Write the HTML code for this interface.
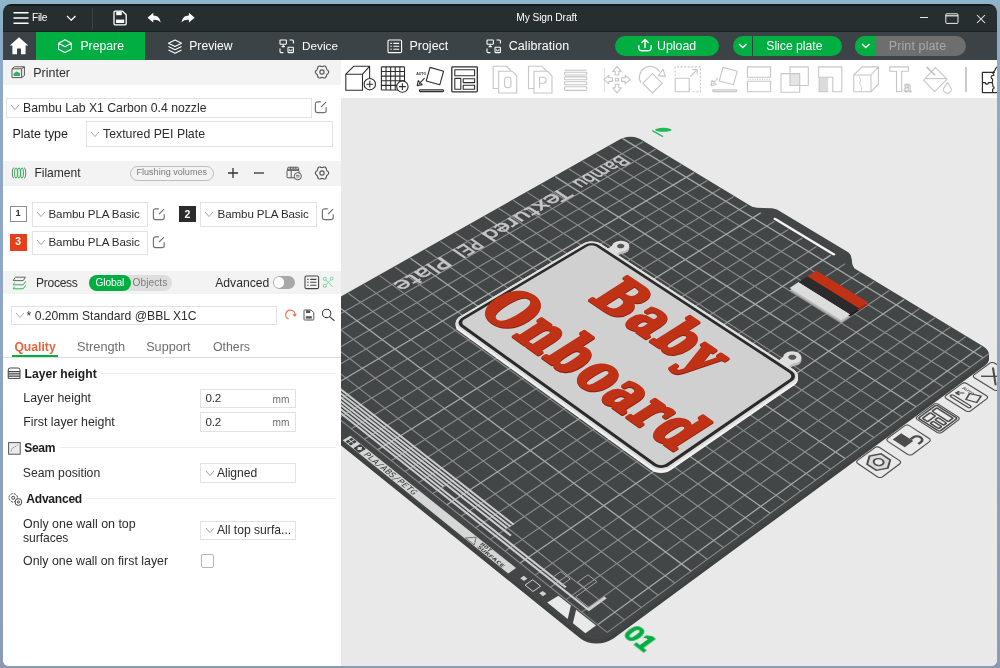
<!DOCTYPE html><html><head><meta charset="utf-8"><title>My Sign Draft</title><style>
*{box-sizing:border-box;margin:0;padding:0}
html,body{width:1000px;height:668px;overflow:hidden}
body{background:#8fa9c6;font-family:"Liberation Sans",sans-serif;position:relative;color:#2b2b2b}
#desk{position:absolute;left:0;top:0;width:1000px;height:668px;background:linear-gradient(180deg,#8eb5cc 0px,#8dabc8 30px,#8fa6c5 300px,#8b9dbb 640px,#8a9ab0 668px)}
#win{position:absolute;left:3px;top:4px;width:994px;height:662px;border-radius:8px 8px 6px 6px;overflow:hidden;background:#fff}
#in{position:absolute;left:-3px;top:-4px;width:1000px;height:668px;will-change:transform}
#in div,#in svg{position:absolute}
.t{white-space:nowrap;line-height:1;transform:translateY(-50%)}
.box{border:1px solid #e2e2e2;background:#fff}
.hdr{left:3px;width:338px;height:25px;background:#f3f3f3}
.ln{height:1px;background:#e6e6e6}
</style></head><body><div id="desk"></div><div id="win"><div id="in"><svg style="left:0;top:0" width="1000" height="668" viewBox="0 0 1000 668"><rect x="341" y="97" width="656" height="570" fill="#e9e9e9"/>
<path d="M985.33,365.34 L987.61,363.09 L988.85,360.46 L988.98,357.64 L987.99,354.83 L985.96,352.21 L983.03,349.96 L854.6,272.23 L852.53,268.99 L850.89,259.11 L848.59,256.09 L776.97,213.05 L772.25,211.8 L757.01,211.24 L752.05,210.16 L640.61,142.72 L637.66,141.35 L634.21,140.49 L630.48,140.18 L626.72,140.46 L623.19,141.29 L620.11,142.62 L245.13,354.21 L242.76,355.89 L241.03,357.85 L240.08,359.96 L239.97,362.08 L240.7,364.07 L242.23,365.78 L580.09,638.2 L583.53,640.46 L587.53,642.16 L591.91,643.21 L596.5,643.59 L601.14,643.26 L605.63,642.25 L609.79,640.6 L613.47,638.38Z" fill="#3f4242"/>
<path d="M985.33,364.06 L987.61,361.81 L988.85,359.18 L988.98,356.37 L987.99,353.55 L985.96,350.94 L983.03,348.69 L854.6,271.01 L852.53,267.77 L850.89,257.9 L848.59,254.88 L776.97,211.87 L772.25,210.63 L757.01,210.07 L752.05,208.99 L640.61,141.59 L637.66,140.22 L634.21,139.36 L630.48,139.06 L626.72,139.33 L623.19,140.16 L620.11,141.49 L245.13,352.94 L242.76,354.61 L241.03,356.57 L240.08,358.68 L239.97,360.8 L240.7,362.79 L242.23,364.5 L580.09,636.73 L583.53,638.99 L587.53,640.68 L591.91,641.74 L596.5,642.11 L601.14,641.79 L605.63,640.78 L609.79,639.13 L613.47,636.91Z" fill="#3f4242"/>
<path d="M985.33,362.78 L987.61,360.52 L988.85,357.9 L988.98,355.09 L987.99,352.28 L985.96,349.66 L983.03,347.42 L854.6,269.79 L852.53,266.56 L850.89,256.69 L848.59,253.67 L776.97,210.69 L772.25,209.45 L757.01,208.89 L752.05,207.81 L640.61,140.46 L637.66,139.1 L634.21,138.23 L630.48,137.93 L626.72,138.2 L623.19,139.03 L620.11,140.36 L245.13,351.66 L242.76,353.33 L241.03,355.29 L240.08,357.4 L239.97,359.52 L240.7,361.5 L242.23,363.22 L580.09,635.25 L583.53,637.52 L587.53,639.21 L591.91,640.26 L596.5,640.63 L601.14,640.31 L605.63,639.3 L609.79,637.66 L613.47,635.43Z" fill="#3f4242"/>
<path d="M985.33,361.49 L987.61,359.24 L988.85,356.62 L988.98,353.81 L987.99,351 L985.96,348.39 L983.03,346.14 L854.6,268.57 L852.53,265.34 L850.89,255.48 L848.59,252.46 L776.97,209.52 L772.25,208.27 L757.01,207.71 L752.05,206.63 L640.61,139.33 L637.66,137.97 L634.21,137.11 L630.48,136.8 L626.72,137.07 L623.19,137.9 L620.11,139.23 L245.13,350.38 L242.76,352.06 L241.03,354.01 L240.08,356.12 L239.97,358.24 L240.7,360.22 L242.23,361.93 L580.09,633.78 L583.53,636.04 L587.53,637.73 L591.91,638.78 L596.5,639.16 L601.14,638.83 L605.63,637.83 L609.79,636.18 L613.47,633.96Z" fill="#434646"/>
<path d="M547.23,602.61 L558.42,595.65 L570.9,605.59 L567.7,619.05Z" fill="#e9e9e9"/>
<path d="M576.08,609.71 L596.04,625.62 L585.46,633.3 L572.91,623.23Z" fill="#e9e9e9"/>
<clipPath id="pc"><path d="M985.33,361.49 L987.61,359.24 L988.85,356.62 L988.98,353.81 L987.99,351 L985.96,348.39 L983.03,346.14 L854.6,268.57 L852.53,265.34 L850.89,255.48 L848.59,252.46 L776.97,209.52 L772.25,208.27 L757.01,207.71 L752.05,206.63 L640.61,139.33 L637.66,137.97 L634.21,137.11 L630.48,136.8 L626.72,137.07 L623.19,137.9 L620.11,139.23 L245.13,350.38 L242.76,352.06 L241.03,354.01 L240.08,356.12 L239.97,358.24 L240.7,360.22 L242.23,361.93 L580.09,633.78 L583.53,636.04 L587.53,637.73 L591.91,638.78 L596.5,639.16 L601.14,638.83 L605.63,637.83 L609.79,636.18 L613.47,633.96Z" /></clipPath>
<g clip-path="url(#pc)"><line x1="262.54" y1="358.06" x2="643.08" y2="141.74" stroke="#8a8d8d" stroke-width="1.15"/><line x1="267.13" y1="338.98" x2="624.38" y2="619.85" stroke="#8a8d8d" stroke-width="1.15"/><line x1="274.81" y1="367.83" x2="655.67" y2="149.35" stroke="#8a8d8d" stroke-width="1.15"/><line x1="283.68" y1="329.65" x2="641.35" y2="607.45" stroke="#8a8d8d" stroke-width="1.15"/><line x1="287.21" y1="377.7" x2="668.38" y2="157.03" stroke="#8a8d8d" stroke-width="1.15"/><line x1="300.07" y1="320.42" x2="658.12" y2="595.19" stroke="#8a8d8d" stroke-width="1.15"/><line x1="299.74" y1="387.67" x2="681.21" y2="164.78" stroke="#8a8d8d" stroke-width="1.15"/><line x1="316.3" y1="311.28" x2="674.7" y2="583.08" stroke="#8a8d8d" stroke-width="1.15"/><line x1="325.2" y1="407.94" x2="707.23" y2="180.51" stroke="#8a8d8d" stroke-width="1.15"/><line x1="348.25" y1="293.27" x2="707.29" y2="559.27" stroke="#8a8d8d" stroke-width="1.15"/><line x1="338.14" y1="418.24" x2="720.43" y2="188.48" stroke="#8a8d8d" stroke-width="1.15"/><line x1="363.99" y1="284.4" x2="723.31" y2="547.57" stroke="#8a8d8d" stroke-width="1.15"/><line x1="351.22" y1="428.65" x2="733.75" y2="196.54" stroke="#8a8d8d" stroke-width="1.15"/><line x1="379.58" y1="275.62" x2="739.14" y2="536.01" stroke="#8a8d8d" stroke-width="1.15"/><line x1="364.45" y1="439.18" x2="747.2" y2="204.66" stroke="#8a8d8d" stroke-width="1.15"/><line x1="395.01" y1="266.93" x2="754.79" y2="524.57" stroke="#8a8d8d" stroke-width="1.15"/><line x1="391.33" y1="460.58" x2="774.49" y2="221.16" stroke="#8a8d8d" stroke-width="1.15"/><line x1="425.42" y1="249.8" x2="785.57" y2="502.08" stroke="#8a8d8d" stroke-width="1.15"/><line x1="405" y1="471.46" x2="788.34" y2="229.53" stroke="#8a8d8d" stroke-width="1.15"/><line x1="440.4" y1="241.36" x2="800.71" y2="491.03" stroke="#8a8d8d" stroke-width="1.15"/><line x1="418.82" y1="482.46" x2="802.32" y2="237.98" stroke="#8a8d8d" stroke-width="1.15"/><line x1="455.24" y1="233" x2="815.67" y2="480.09" stroke="#8a8d8d" stroke-width="1.15"/><line x1="432.8" y1="493.58" x2="816.44" y2="246.51" stroke="#8a8d8d" stroke-width="1.15"/><line x1="469.93" y1="224.72" x2="830.48" y2="469.28" stroke="#8a8d8d" stroke-width="1.15"/><line x1="461.22" y1="516.21" x2="845.1" y2="263.83" stroke="#8a8d8d" stroke-width="1.15"/><line x1="498.9" y1="208.4" x2="859.6" y2="448" stroke="#8a8d8d" stroke-width="1.15"/><line x1="475.68" y1="527.72" x2="859.65" y2="272.62" stroke="#8a8d8d" stroke-width="1.15"/><line x1="513.18" y1="200.35" x2="873.92" y2="437.54" stroke="#8a8d8d" stroke-width="1.15"/><line x1="490.31" y1="539.36" x2="874.34" y2="281.5" stroke="#8a8d8d" stroke-width="1.15"/><line x1="527.32" y1="192.38" x2="888.09" y2="427.18" stroke="#8a8d8d" stroke-width="1.15"/><line x1="505.1" y1="551.13" x2="889.18" y2="290.46" stroke="#8a8d8d" stroke-width="1.15"/><line x1="541.33" y1="184.49" x2="902.11" y2="416.94" stroke="#8a8d8d" stroke-width="1.15"/><line x1="535.21" y1="575.1" x2="919.31" y2="308.67" stroke="#8a8d8d" stroke-width="1.15"/><line x1="568.96" y1="168.93" x2="929.7" y2="396.78" stroke="#8a8d8d" stroke-width="1.15"/><line x1="550.52" y1="587.29" x2="934.61" y2="317.92" stroke="#8a8d8d" stroke-width="1.15"/><line x1="582.59" y1="161.25" x2="943.28" y2="386.86" stroke="#8a8d8d" stroke-width="1.15"/><line x1="566.03" y1="599.63" x2="950.06" y2="327.26" stroke="#8a8d8d" stroke-width="1.15"/><line x1="596.08" y1="153.65" x2="956.72" y2="377.05" stroke="#8a8d8d" stroke-width="1.15"/><line x1="581.71" y1="612.11" x2="965.68" y2="336.7" stroke="#8a8d8d" stroke-width="1.15"/><line x1="609.46" y1="146.11" x2="970.01" y2="367.33" stroke="#8a8d8d" stroke-width="1.15"/><line x1="312.4" y1="397.75" x2="694.16" y2="172.61" stroke="#a6a9a9" stroke-width="1.3"/><line x1="332.35" y1="302.23" x2="691.09" y2="571.11" stroke="#a6a9a9" stroke-width="1.3"/><line x1="377.82" y1="449.82" x2="760.78" y2="212.87" stroke="#a6a9a9" stroke-width="1.3"/><line x1="410.29" y1="258.32" x2="770.27" y2="513.26" stroke="#a6a9a9" stroke-width="1.3"/><line x1="446.93" y1="504.83" x2="830.7" y2="255.13" stroke="#a6a9a9" stroke-width="1.3"/><line x1="484.49" y1="216.52" x2="845.12" y2="458.58" stroke="#a6a9a9" stroke-width="1.3"/><line x1="520.07" y1="563.04" x2="904.17" y2="299.52" stroke="#a6a9a9" stroke-width="1.3"/><line x1="555.21" y1="176.67" x2="915.98" y2="406.81" stroke="#a6a9a9" stroke-width="1.3"/><line x1="597.58" y1="624.75" x2="981.45" y2="346.23" stroke="#a6a9a9" stroke-width="1.3"/><line x1="622.71" y1="138.65" x2="983.17" y2="357.72" stroke="#a6a9a9" stroke-width="1.3"/><line x1="250.4" y1="348.4" x2="607.2" y2="632.4" stroke="#939696" stroke-width="1.1" stroke-opacity="0.85"/><line x1="607.2" y1="632.4" x2="991" y2="352" stroke="#939696" stroke-width="1.1" stroke-opacity="0.85"/></g>
<text transform="matrix(-1.3559 0.7708 -1.2518 -0.7826 595.72 168.66)" font-size="13" text-anchor="middle" fill="#c6c8c8" stroke="#c6c8c8" stroke-width="0.35" font-family="'DejaVu Sans','Liberation Sans',sans-serif" textLength="36.0" lengthAdjust="spacingAndGlyphs">Bambu</text>
<text transform="matrix(-1.4264 0.8109 -1.2479 -0.8232 520.97 211.15)" font-size="13" text-anchor="middle" fill="#c6c8c8" stroke="#c6c8c8" stroke-width="0.35" font-family="'DejaVu Sans','Liberation Sans',sans-serif" textLength="57.5" lengthAdjust="spacingAndGlyphs">Textured</text>
<text transform="matrix(-1.4828 0.8429 -1.2436 -0.8557 462.51 244.39)" font-size="13" text-anchor="middle" fill="#c6c8c8" stroke="#c6c8c8" stroke-width="0.35" font-family="'DejaVu Sans','Liberation Sans',sans-serif" textLength="15.3" lengthAdjust="spacingAndGlyphs">PEI</text>
<text transform="matrix(-1.5274 0.8683 -1.2395 -0.8813 417.06 270.22)" font-size="13" text-anchor="middle" fill="#c6c8c8" stroke="#c6c8c8" stroke-width="0.35" font-family="'DejaVu Sans','Liberation Sans',sans-serif" textLength="32.7" lengthAdjust="spacingAndGlyphs">Plate</text>
<path d="M271.74,336.38 L512.84,525.3 L514.62,524.1 L273.48,335.4Z" fill="#cdcfcf"/>
<path d="M268.75,338.06 L509.5,527.12 L511.28,525.92 L270.49,337.08Z" fill="#cdcfcf"/>
<path d="M265.92,339.66 L506.16,528.71 L507.95,527.51 L267.67,338.67Z" fill="#cdcfcf"/>
<path d="M262.92,341.35 L510.04,536.24 L511.83,535.03 L264.67,340.36Z" fill="#cdcfcf"/>
<path d="M260.25,342.85 L442.82,487.12 L444.61,485.97 L262,341.86Z" fill="#cdcfcf"/>
<path d="M257.4,344.45 L564.97,588 L566.77,586.74 L259.16,343.46Z" fill="#cdcfcf"/>
<path d="M254.56,346.06 L587.56,610.3 L589.36,609.01 L256.32,345.07Z" fill="#cdcfcf"/>
<path d="M342.68,440.33 L508.25,573.39 L516.05,568.03 L350.38,435.64Z" fill="#d6d6d6"/>
<text transform="matrix(1.3394 1.0753 -1.7169 1.0599 362.93 454.65)" font-size="4.1" text-anchor="start" fill="#3e4141" font-family="'DejaVu Sans Mono','Liberation Mono',monospace" textLength="37.6" lengthAdjust="spacingAndGlyphs">PLA/ABS/PETG</text>
<text transform="matrix(1.4683 1.1763 -1.7289 1.1597 479.87 544.2)" font-size="2.3" text-anchor="start" fill="#3e4141" font-family="'DejaVu Sans Mono','Liberation Mono',monospace" font-weight="bold" textLength="6.8" lengthAdjust="spacingAndGlyphs">HOT</text>
<text transform="matrix(1.4685 1.1796 -1.7331 1.1628 476.68 546.99)" font-size="2.3" text-anchor="start" fill="#3e4141" font-family="'DejaVu Sans Mono','Liberation Mono',monospace" font-weight="bold" textLength="17.6" lengthAdjust="spacingAndGlyphs">SURFACE</text>
<path d="M345.52,441.4 L347.77,443.2 L350.51,441.53 L348.26,439.73Z" fill="#3e4141"/>
<path d="M348.43,443.74 L350.68,445.55 L353.43,443.87 L351.17,442.06Z" fill="#3e4141"/>
<path d="M348.95,439.31 L351.19,441.11 L353.93,439.44 L351.68,437.64Z" fill="#3e4141"/>
<path d="M351.86,441.64 L354.11,443.45 L356.85,441.77 L354.59,439.97Z" fill="#3e4141"/>
<path d="M365.26,449.22 L365.67,448.7 L365.45,448.16 L360.91,444.54 L360.19,444.32 L359.39,444.53 L354.08,447.79 L353.67,448.32 L353.89,448.85 L358.42,452.49 L359.14,452.71 L359.95,452.5Z" fill="#3e4141"/>
<path d="M357.8,447.01 L361.98,447.09 L361.54,450 L357.35,449.93Z" fill="#d6d6d6"/>
<path d="M465.42,537.95 L474.18,544.99 L476.19,537.19Z" fill="none" stroke="#5a5c5c" stroke-width="0.8"/>
<path d="M577.46,582.2 L587.99,574.77 L596.88,581.7 L586.35,589.19Z" fill="none" stroke="#a9abab" stroke-width="0.9"/>
<path d="M552.06,577.72 L560.78,571.62 L570.18,579.02 L561.45,585.16Z" fill="none" stroke="#a9abab" stroke-width="0.9"/>
<path d="M586.35,589.19 L575.56,596.85 L590.18,608.42" fill="none" stroke="#a9abab" stroke-width="0.9"/>
<path d="M586.34,609.27 L588.86,611.28 L606.83,598.36 L604.3,596.38Z" fill="#cdcfcf"/>
<path d="M525.08,585.09 L532.7,579.79 L540.65,586.14 L533.03,591.47Z" fill="none" stroke="#d0d0d0" stroke-width="1"/>
<path d="M520.32,578.15 L523.78,575.76 L527.43,578.67 L523.96,581.07Z" fill="#d0d0d0"/>
<path d="M539.26,593.34 L542.73,590.91 L546.43,593.87 L542.96,596.3Z" fill="#d0d0d0"/>
<path d="M835.08,254.97 L835.43,254.38 L834.99,253.77 L775.85,218.11 L774.9,217.87 L773.97,218.1 L773.71,218.27 L773.34,218.84 L773.75,219.42 L832.9,255.14 L833.87,255.39 L834.82,255.15Z" fill="#f6f6f6"/>
<path d="M789.67,290.26 L841.32,322.56 L850.24,316.5 L798.61,284.42Z" fill="#b9b9b9"/>
<path d="M798.61,284.42 L850.24,316.5 L859.1,310.49 L807.48,278.62Z" fill="#1c1c1c"/>
<path d="M807.48,278.62 L859.1,310.49 L867.91,304.51 L816.3,272.85Z" fill="#9a2410"/>
<path d="M789.67,287.94 L841.32,320.19 L850.24,314.14 L798.61,282.1Z" fill="#dcdcdc"/>
<path d="M798.61,282.1 L850.24,314.14 L859.1,308.14 L807.48,276.31Z" fill="#2b2b2b"/>
<path d="M807.48,276.31 L859.1,308.14 L867.91,302.17 L816.3,270.55Z" fill="#c03216"/>
<path d="M606.71,252.02 L614.66,257.21 L625.49,251.68 L615.96,245.49Z" fill="#bdbdbd"/>
<path d="M626.56,252.37 L627.96,251.27 L628.87,249.99 L629.22,248.62 L628.99,247.24 L628.2,245.96 L626.9,244.86 L625.19,244.01 L623.16,243.47 L620.98,243.28 L618.78,243.45 L616.7,243.97 L614.9,244.8 L613.49,245.89 L612.58,247.16 L612.21,248.54 L612.43,249.91 L613.21,251.2 L614.5,252.31 L616.23,253.17 L618.25,253.71 L620.45,253.9 L622.67,253.73 L624.75,253.21Z" fill="#bdbdbd"/>
<path d="M606.71,250.74 L614.66,255.93 L625.49,250.4 L615.96,244.21Z" fill="#bdbdbd"/>
<path d="M626.56,251.09 L627.96,249.99 L628.87,248.71 L629.22,247.34 L628.99,245.97 L628.2,244.69 L626.9,243.58 L625.19,242.74 L623.16,242.2 L620.98,242.01 L618.78,242.18 L616.7,242.7 L614.9,243.53 L613.49,244.62 L612.58,245.89 L612.21,247.26 L612.43,248.64 L613.21,249.92 L614.5,251.03 L616.23,251.89 L618.25,252.43 L620.45,252.62 L622.67,252.45 L624.75,251.93Z" fill="#bdbdbd"/>
<path d="M606.71,249.46 L614.66,254.65 L625.49,249.12 L615.96,242.94Z" fill="#dedede"/>
<path d="M626.56,249.81 L627.96,248.71 L628.87,247.44 L629.22,246.06 L628.99,244.69 L628.2,243.41 L626.9,242.31 L625.19,241.46 L623.16,240.93 L620.98,240.74 L618.78,240.91 L616.7,241.42 L614.9,242.25 L613.49,243.34 L612.58,244.61 L612.21,245.98 L612.43,247.36 L613.21,248.64 L614.5,249.75 L616.23,250.61 L618.25,251.15 L620.45,251.34 L622.67,251.17 L624.75,250.65Z" fill="#dedede"/>
<path d="M623.24,247.66 L624.07,246.92 L624.39,246.04 L624.15,245.16 L623.39,244.42 L622.23,243.92 L620.83,243.74 L619.42,243.9 L618.2,244.39 L617.37,245.13 L617.04,246.01 L617.28,246.88 L618.04,247.63 L619.2,248.13 L620.6,248.32 L622.02,248.15Z" fill="#55585a"/>
<path d="M777.79,363.87 L786.79,369.75 L797.73,363.48 L786.94,356.48Z" fill="#bdbdbd"/>
<path d="M798.94,364.26 L800.32,363.02 L801.15,361.57 L801.38,360.02 L800.99,358.46 L800.01,357.01 L798.52,355.76 L796.6,354.8 L794.4,354.2 L792.05,353.98 L789.73,354.17 L787.58,354.76 L785.75,355.7 L784.36,356.93 L783.52,358.37 L783.28,359.93 L783.65,361.49 L784.62,362.94 L786.11,364.2 L788.03,365.17 L790.25,365.78 L792.61,366 L794.95,365.81 L797.11,365.21Z" fill="#bdbdbd"/>
<path d="M777.79,362.51 L786.79,368.38 L797.73,362.12 L786.94,355.12Z" fill="#bdbdbd"/>
<path d="M798.94,362.9 L800.32,361.66 L801.15,360.21 L801.38,358.66 L800.99,357.1 L800.01,355.65 L798.52,354.41 L796.6,353.45 L794.4,352.84 L792.05,352.63 L789.73,352.82 L787.58,353.41 L785.75,354.35 L784.36,355.58 L783.52,357.02 L783.28,358.57 L783.65,360.13 L784.62,361.58 L786.11,362.84 L788.03,363.81 L790.25,364.42 L792.61,364.64 L794.95,364.44 L797.11,363.85Z" fill="#bdbdbd"/>
<path d="M777.79,361.15 L786.79,367.02 L797.73,360.76 L786.94,353.76Z" fill="#dedede"/>
<path d="M798.94,361.54 L800.32,360.3 L801.15,358.85 L801.38,357.3 L800.99,355.75 L800.01,354.3 L798.52,353.05 L796.6,352.1 L794.4,351.49 L792.05,351.27 L789.73,351.47 L787.58,352.05 L785.75,352.99 L784.36,354.22 L783.52,355.66 L783.28,357.21 L783.65,358.77 L784.62,360.22 L786.11,361.48 L788.03,362.45 L790.25,363.06 L792.61,363.28 L794.95,363.08 L797.11,362.49Z" fill="#dedede"/>
<path d="M795.18,359.1 L795.99,358.27 L796.24,357.28 L795.89,356.28 L795,355.44 L793.71,354.87 L792.21,354.67 L790.72,354.86 L789.48,355.41 L788.67,356.25 L788.42,357.24 L788.76,358.23 L789.65,359.08 L790.94,359.65 L792.45,359.85 L793.94,359.66Z" fill="#55585a"/>
<path d="M794.23,385.14 L795.85,383.76 L797.02,382.2 L797.71,380.5 L797.88,378.73 L797.54,376.96 L796.69,375.26 L795.37,373.7 L793.63,372.32 L600.76,246.35 L598.92,245.37 L596.79,244.64 L594.47,244.18 L592.04,244.02 L589.58,244.16 L587.2,244.59 L584.98,245.31 L583.01,246.27 L460.48,318.87 L458.68,320.15 L457.27,321.62 L456.31,323.21 L455.82,324.88 L455.84,326.55 L456.37,328.16 L457.38,329.65 L458.84,330.96 L651.04,469.99 L653.15,471.24 L655.58,472.18 L658.22,472.76 L660.98,472.97 L663.76,472.79 L666.43,472.23 L668.9,471.32 L671.07,470.09Z" fill="#f2f2f2"/>
<path d="M794.23,384.45 L795.85,383.08 L797.02,381.51 L797.71,379.81 L797.88,378.04 L797.54,376.28 L796.69,374.58 L795.37,373.01 L793.63,371.64 L600.76,245.71 L598.92,244.73 L596.79,244 L594.47,243.55 L592.04,243.39 L589.58,243.52 L587.2,243.96 L584.98,244.67 L583.01,245.63 L460.48,318.21 L458.68,319.49 L457.27,320.95 L456.31,322.55 L455.82,324.21 L455.84,325.88 L456.37,327.49 L457.38,328.98 L458.84,330.29 L651.04,469.27 L653.15,470.52 L655.58,471.46 L658.22,472.04 L660.98,472.25 L663.76,472.07 L666.43,471.51 L668.9,470.6 L671.07,469.37Z" fill="#f2f2f2"/>
<path d="M794.23,383.76 L795.85,382.39 L797.02,380.82 L797.71,379.12 L797.88,377.36 L797.54,375.59 L796.69,373.89 L795.37,372.33 L793.63,370.96 L600.76,245.08 L598.92,244.1 L596.79,243.36 L594.47,242.91 L592.04,242.75 L589.58,242.89 L587.2,243.32 L584.98,244.03 L583.01,244.99 L460.48,317.54 L458.68,318.82 L457.27,320.29 L456.31,321.88 L455.82,323.55 L455.84,325.22 L456.37,326.83 L457.38,328.31 L458.84,329.62 L651.04,468.55 L653.15,469.8 L655.58,470.74 L658.22,471.32 L660.98,471.53 L663.76,471.35 L666.43,470.79 L668.9,469.88 L671.07,468.65Z" fill="#f2f2f2"/>
<path d="M794.23,383.07 L795.85,381.7 L797.02,380.13 L797.71,378.44 L797.88,376.67 L797.54,374.91 L796.69,373.21 L795.37,371.64 L793.63,370.27 L600.76,244.44 L598.92,243.46 L596.79,242.73 L594.47,242.27 L592.04,242.11 L589.58,242.25 L587.2,242.68 L584.98,243.39 L583.01,244.36 L460.48,316.88 L458.68,318.16 L457.27,319.62 L456.31,321.22 L455.82,322.88 L455.84,324.55 L456.37,326.16 L457.38,327.65 L458.84,328.96 L651.04,467.83 L653.15,469.08 L655.58,470.02 L658.22,470.6 L660.98,470.8 L663.76,470.63 L666.43,470.07 L668.9,469.16 L671.07,467.94Z" fill="#f2f2f2"/>
<path d="M794.23,382.38 L795.85,381.01 L797.02,379.45 L797.71,377.75 L797.88,375.98 L797.54,374.22 L796.69,372.52 L795.37,370.96 L793.63,369.59 L600.76,243.8 L598.92,242.82 L596.79,242.09 L594.47,241.64 L592.04,241.48 L589.58,241.61 L587.2,242.05 L584.98,242.76 L583.01,243.72 L460.48,316.22 L458.68,317.49 L457.27,318.96 L456.31,320.55 L455.82,322.21 L455.84,323.88 L456.37,325.49 L457.38,326.98 L458.84,328.29 L651.04,467.11 L653.15,468.36 L655.58,469.3 L658.22,469.88 L660.98,470.08 L663.76,469.91 L666.43,469.35 L668.9,468.44 L671.07,467.22Z" fill="#f2f2f2"/>
<path d="M794.23,382.38 L795.85,381.01 L797.02,379.45 L797.71,377.75 L797.88,375.98 L797.54,374.22 L796.69,372.52 L795.37,370.96 L793.63,369.59 L600.76,243.8 L598.92,242.82 L596.79,242.09 L594.47,241.64 L592.04,241.48 L589.58,241.61 L587.2,242.05 L584.98,242.76 L583.01,243.72 L460.48,316.22 L458.68,317.49 L457.27,318.96 L456.31,320.55 L455.82,322.21 L455.84,323.88 L456.37,325.49 L457.38,326.98 L458.84,328.29 L651.04,467.11 L653.15,468.36 L655.58,469.3 L658.22,469.88 L660.98,470.08 L663.76,469.91 L666.43,469.35 L668.9,468.44 L671.07,467.22Z" fill="#dedede"/>
<path d="M792.1,380.99 L793.37,379.91 L794.29,378.69 L794.83,377.35 L794.97,375.97 L794.7,374.59 L794.04,373.25 L793.01,372.03 L791.64,370.95 L598.77,244.98 L597.33,244.21 L595.66,243.64 L593.84,243.28 L591.93,243.16 L590,243.26 L588.13,243.6 L586.39,244.16 L584.84,244.92 L462.3,317.52 L460.89,318.52 L459.78,319.67 L459.02,320.92 L458.65,322.23 L458.67,323.54 L459.08,324.8 L459.87,325.96 L461.02,326.99 L653.24,465.61 L654.89,466.59 L656.8,467.32 L658.87,467.78 L661.04,467.94 L663.21,467.8 L665.3,467.36 L667.24,466.65 L668.94,465.69Z" fill="#2a2a2a"/>
<path d="M789.37,379.2 L790.19,378.5 L790.79,377.71 L791.14,376.85 L791.23,375.95 L791.06,375.06 L790.63,374.19 L789.96,373.4 L789.08,372.7 L596.22,246.51 L595.28,246.01 L594.2,245.63 L593.02,245.4 L591.78,245.32 L590.53,245.39 L589.32,245.61 L588.19,245.97 L587.19,246.46 L464.64,319.2 L463.72,319.85 L463.01,320.59 L462.52,321.4 L462.28,322.24 L462.29,323.09 L462.56,323.91 L463.08,324.66 L463.82,325.32 L656.06,463.68 L657.13,464.31 L658.36,464.78 L659.7,465.08 L661.1,465.18 L662.5,465.09 L663.86,464.81 L665.11,464.35 L666.21,463.73Z" fill="#d0d0d0"/>
<text transform="matrix(1.2109 0.8205 -1.4717 0.9401 645.33 338.62)" font-size="35" text-anchor="middle" fill="#8e1f0d" stroke="#8e1f0d" stroke-width="1.7" letter-spacing="1.9" font-stretch="condensed" font-family="'DejaVu Serif Condensed','DejaVu Serif','Liberation Serif',serif" font-weight="bold" stroke-linejoin="round">Baby</text>
<text transform="matrix(1.2086 0.8602 -1.5431 0.9857 576.77 382.34)" font-size="35" text-anchor="middle" fill="#8e1f0d" stroke="#8e1f0d" stroke-width="1.7" letter-spacing="1.9" font-stretch="condensed" font-family="'DejaVu Serif Condensed','DejaVu Serif','Liberation Serif',serif" font-weight="bold" stroke-linejoin="round">Onboard</text>
<text transform="matrix(1.2109 0.8205 -1.4717 0.9401 645.33 337.57)" font-size="35" text-anchor="middle" fill="#c03216" stroke="#c03216" stroke-width="1.7" letter-spacing="1.9" font-stretch="condensed" font-family="'DejaVu Serif Condensed','DejaVu Serif','Liberation Serif',serif" font-weight="bold" stroke-linejoin="round">Baby</text>
<text transform="matrix(1.2086 0.8602 -1.5431 0.9857 576.77 381.27)" font-size="35" text-anchor="middle" fill="#c03216" stroke="#c03216" stroke-width="1.7" letter-spacing="1.9" font-stretch="condensed" font-family="'DejaVu Serif Condensed','DejaVu Serif','Liberation Serif',serif" font-weight="bold" stroke-linejoin="round">Onboard</text>
<path d="M1014.66,377.92 L1015.31,376.99 L1015.13,375.91 L1014.18,374.97 L994.44,362.99 L992.97,362.45 L991.37,362.44 L990.07,362.97 L974,374.78 L973.32,375.7 L973.48,376.78 L974.42,377.72 L994.18,389.9 L995.67,390.45 L997.3,390.46 L998.62,389.92Z" fill="none" stroke="#4c4c4c" stroke-width="1.1"/>
<g transform="matrix(1.6188 0.9901 -1.3163 0.9757 994.31 376.35)"><path d="M-4.5,-4.5 L4.5,4.5 M-4.5,4.5 L4.5,-4.5" stroke="#4c4c4c" stroke-width="1" fill="none"/></g>
<path d="M986.91,398.67 L987.59,397.72 L987.42,396.62 L986.47,395.66 L966.69,383.41 L965.22,382.86 L963.6,382.85 L962.28,383.39 L945.84,395.46 L945.15,396.41 L945.29,397.51 L946.23,398.47 L966.03,410.92 L967.52,411.49 L969.17,411.5 L970.51,410.94Z" fill="none" stroke="#4c4c4c" stroke-width="1.1"/>
<g transform="matrix(1.6218 1.0122 -1.3457 0.9975 966.36 397.06)" stroke="#4c4c4c" stroke-width="0.8" fill="none"><rect x="-6" y="3.4" width="12" height="1.7" rx="0.8"/><path d="M-0.5,-3 L4.5,-5.5 L6,-0.5 L1,1.5 Z"/><path d="M-5.5,1.5 L-2.5,-1.5 M-5.5,1.5 L-5,-0.8 M-5.5,1.5 L-3.2,1.2"/></g>
<text transform="matrix(1.6119 1.0029 -1.3419 0.9883 961.77 388.35)" font-size="2.4" text-anchor="start" fill="#4c4c4c" font-family="'Liberation Sans',sans-serif" font-weight="bold">AUTO</text>
<path d="M958.54,419.89 L959.24,418.92 L959.09,417.79 L958.14,416.81 L938.33,404.28 L936.84,403.72 L935.21,403.71 L933.86,404.26 L917.06,416.61 L916.34,417.58 L916.47,418.71 L917.4,419.69 L937.23,432.42 L938.74,433 L940.4,433.01 L941.77,432.44Z" fill="none" stroke="#4c4c4c" stroke-width="1.1"/>
<g transform="matrix(1.6246 1.0350 -1.3762 1.0201 937.78 418.25)" stroke="#4c4c4c" stroke-width="0.9" fill="none"><rect x="-6.5" y="-6.5" width="13" height="13" rx="1"/><rect x="-5" y="-5.2" width="10" height="3.4" rx="0.4"/><rect x="-5" y="-0.4" width="3.2" height="5.6" rx="0.4"/><rect x="-0.2" y="-0.4" width="5.2" height="2.1" rx="0.4"/><rect x="-0.2" y="3.1" width="5.2" height="2.1" rx="0.4"/></g>
<path d="M929.53,441.6 L930.24,440.6 L930.11,439.44 L929.16,438.44 L909.32,425.63 L907.83,425.06 L906.18,425.05 L904.8,425.61 L887.62,438.23 L886.88,439.23 L886.99,440.38 L887.92,441.39 L907.78,454.41 L909.29,455 L910.97,455.01 L912.36,454.43Z" fill="none" stroke="#4c4c4c" stroke-width="1.1"/>
<g transform="matrix(1.6271 1.0586 -1.4076 1.0434 908.56 439.91)"><rect x="-5.4" y="-1" width="7.4" height="6" fill="#4c4c4c"/><path d="M0.4,-1 V-3 A2.3,2.3 0 0 1 5,-3 V-1.2" stroke="#4c4c4c" stroke-width="1.3" fill="none"/></g>
<path d="M899.84,463.8 L900.58,462.78 L900.47,461.6 L899.52,460.57 L879.65,447.47 L878.15,446.88 L876.48,446.87 L875.08,447.44 L857.51,460.36 L856.74,461.38 L856.83,462.56 L857.75,463.58 L877.64,476.91 L879.16,477.52 L880.86,477.52 L882.28,476.93Z" fill="none" stroke="#4c4c4c" stroke-width="1.1"/>
<g transform="matrix(1.6293 1.0831 -1.4402 1.0675 878.65 462.08)" stroke="#4c4c4c" stroke-width="0.9" fill="none"><polygon points="5.6,0 2.8,4.85 -2.8,4.85 -5.6,0 -2.8,-4.85 2.8,-4.85" fill="#d9d9d9"/><circle r="2.3" fill="#ebebeb"/></g>
<text transform="matrix(1.6188 1.2831 -1.7212 1.2651 621.45 634.77)" font-size="12.5" text-anchor="start" fill="#00ae42" stroke="#00ae42" stroke-width="0.5" font-family="'Liberation Sans',sans-serif" font-weight="bold">01</text>
<ellipse cx="663.3" cy="129.8" rx="8.3" ry="2" fill="#00ae42" opacity="0.85"/>
<path d="M652.3,130.6 L663,136.6" stroke="#00ae42" stroke-width="1.3" opacity="0.85"/></svg><div style="left:3px;top:60px;width:338px;height:606px;background:#fff;"></div>
<div style="left:3px;top:60px;width:338px;height:24.5px;background:#f3f3f3;"></div>
<svg style="left:11px;top:66px" width="15" height="13" viewBox="0 0 15 13"><g fill="none" stroke="#555" stroke-width="1"><path d="M1,2.8 H10.6 V11.6 H1 Z M1,2.8 L3.6,0.8 H13.4 L10.6,2.8 M13.4,0.8 V9.6 L10.6,11.6"/></g><path d="M2.6,10 V7.4 L5.4,5.6 L9,7 V10 Z" fill="#2fb35c"/></svg>
<svg style="left:314.4px;top:63.8px" width="16" height="16" viewBox="0 0 16 16"><path d="M14.67,8.00 L14.56,8.57 L14.26,9.10 L13.84,9.57 L13.39,9.96 L13.00,10.33 L12.70,10.71 L12.52,11.16 L12.40,11.69 L12.28,12.28 L12.09,12.87 L11.78,13.40 L11.34,13.78 L10.78,13.97 L10.18,13.98 L9.57,13.84 L9.00,13.65 L8.48,13.49 L8.00,13.43 L7.52,13.49 L7.00,13.65 L6.43,13.84 L5.82,13.98 L5.22,13.97 L4.67,13.78 L4.22,13.40 L3.91,12.87 L3.72,12.28 L3.60,11.69 L3.48,11.16 L3.30,10.72 L3.00,10.33 L2.61,9.96 L2.16,9.57 L1.74,9.10 L1.44,8.57 L1.33,8.00 L1.44,7.43 L1.74,6.90 L2.16,6.43 L2.61,6.04 L3.00,5.67 L3.30,5.29 L3.48,4.84 L3.60,4.31 L3.72,3.72 L3.91,3.13 L4.22,2.60 L4.66,2.22 L5.22,2.03 L5.82,2.02 L6.43,2.16 L7.00,2.35 L7.52,2.51 L8.00,2.57 L8.48,2.51 L9.00,2.35 L9.57,2.16 L10.18,2.02 L10.78,2.03 L11.33,2.22 L11.78,2.60 L12.09,3.13 L12.28,3.72 L12.40,4.31 L12.52,4.84 L12.70,5.29 L13.00,5.67 L13.39,6.04 L13.84,6.43 L14.26,6.90 L14.56,7.43Z" fill="none" stroke="#555" stroke-width="1.15" stroke-linejoin="round"/><circle cx="8" cy="8" r="2.15" fill="none" stroke="#555" stroke-width="1.15"/></svg>
<div class="box" style="left:6px;top:98px;width:306px;height:19.5px"></div>
<svg style="left:10.0px;top:104.25px" width="10" height="6.5" viewBox="0 0 10 6.5"><path d="M1,1 L5.0,5.5 L9,1" fill="none" stroke="#a2a2a2" stroke-width="1"/></svg>
<svg style="left:314px;top:99.8px" width="14" height="14" viewBox="0 0 14 14"><path d="M12.2,7.2 V10.4 a2.2,2.2 0 0 1 -2.2,2.2 H3.6 a2.2,2.2 0 0 1 -2.2,-2.2 V4 a2.2,2.2 0 0 1 2.2,-2.2 H6.8" fill="none" stroke="#6f6f6f" stroke-width="1.15"/><path d="M7,7.2 L12,2.2" stroke="#6f6f6f" stroke-width="1.15"/></svg>
<div class="box" style="left:86px;top:120.5px;width:246.5px;height:26.5px"></div>
<svg style="left:90.0px;top:130.75px" width="10" height="6.5" viewBox="0 0 10 6.5"><path d="M1,1 L5.0,5.5 L9,1" fill="none" stroke="#a2a2a2" stroke-width="1"/></svg>
<div style="left:3px;top:160.5px;width:338px;height:25.5px;background:#f3f3f3;"></div>
<svg style="left:11px;top:166px" width="16" height="14" viewBox="0 0 16 14"><g fill="none" stroke-width="1"><path d="M2.6,1.6 C0.8,3.6 0.8,10.4 2.6,12.4" stroke="#777"/><ellipse cx="5" cy="7" rx="1.5" ry="5.2" stroke="#2fb35c"/><ellipse cx="8" cy="7" rx="1.5" ry="5.2" stroke="#2fb35c"/><ellipse cx="11" cy="7" rx="1.5" ry="5.2" stroke="#2fb35c"/><path d="M13.4,1.6 C15.2,3.6 15.2,10.4 13.4,12.4" stroke="#777"/></g></svg>
<div style="left:130px;top:165.5px;width:83.5px;height:15.5px;border:1px solid #bdbdbd;border-radius:8px;background:#f3f3f3"></div>
<svg style="left:227px;top:167.3px" width="12" height="12" viewBox="0 0 12 12"><path d="M6,1 V11 M1,6 H11" stroke="#333" stroke-width="1.3"/></svg>
<svg style="left:253px;top:167.3px" width="12" height="12" viewBox="0 0 12 12"><path d="M1,6 H11" stroke="#333" stroke-width="1.3"/></svg>
<svg style="left:286px;top:166px" width="17" height="15" viewBox="0 0 17 15"><g fill="none" stroke="#555" stroke-width="1"><path d="M1.6,4.4 V2.4 a1.2,1.2 0 0 1 1.2,-1.2 H11.4 a1.2,1.2 0 0 1 1.2,1.2 V4.4"/><path d="M1.6,3.2 H12.6 M4.4,1.2 V3.2 M7.1,1.2 V3.2 M9.8,1.2 V3.2"/><rect x="1" y="4.4" width="12.2" height="7.4" rx="1"/><path d="M5.2,4.4 V11.8"/></g><circle cx="11.8" cy="10.2" r="3.6" fill="#f3f3f3" stroke="#555" stroke-width="1"/><path d="M10,9.4 H13.4 M13.6,11 H10.2" stroke="#555" stroke-width="0.8"/></svg>
<svg style="left:314px;top:165.3px" width="16" height="16" viewBox="0 0 16 16"><path d="M14.67,8.00 L14.56,8.57 L14.26,9.10 L13.84,9.57 L13.39,9.96 L13.00,10.33 L12.70,10.71 L12.52,11.16 L12.40,11.69 L12.28,12.28 L12.09,12.87 L11.78,13.40 L11.34,13.78 L10.78,13.97 L10.18,13.98 L9.57,13.84 L9.00,13.65 L8.48,13.49 L8.00,13.43 L7.52,13.49 L7.00,13.65 L6.43,13.84 L5.82,13.98 L5.22,13.97 L4.67,13.78 L4.22,13.40 L3.91,12.87 L3.72,12.28 L3.60,11.69 L3.48,11.16 L3.30,10.72 L3.00,10.33 L2.61,9.96 L2.16,9.57 L1.74,9.10 L1.44,8.57 L1.33,8.00 L1.44,7.43 L1.74,6.90 L2.16,6.43 L2.61,6.04 L3.00,5.67 L3.30,5.29 L3.48,4.84 L3.60,4.31 L3.72,3.72 L3.91,3.13 L4.22,2.60 L4.66,2.22 L5.22,2.03 L5.82,2.02 L6.43,2.16 L7.00,2.35 L7.52,2.51 L8.00,2.57 L8.48,2.51 L9.00,2.35 L9.57,2.16 L10.18,2.02 L10.78,2.03 L11.33,2.22 L11.78,2.60 L12.09,3.13 L12.28,3.72 L12.40,4.31 L12.52,4.84 L12.70,5.29 L13.00,5.67 L13.39,6.04 L13.84,6.43 L14.26,6.90 L14.56,7.43Z" fill="none" stroke="#555" stroke-width="1.15" stroke-linejoin="round"/><circle cx="8" cy="8" r="2.15" fill="none" stroke="#555" stroke-width="1.15"/></svg>
<div style="left:10px;top:205.5px;width:16.5px;height:16.5px;border:1px solid #8c8c8c;background:#fff"></div>
<div class="box" style="left:31.5px;top:202px;width:116.0px;height:24.5px"></div>
<svg style="left:35.5px;top:211.15px" width="10" height="6.5" viewBox="0 0 10 6.5"><path d="M1,1 L5.0,5.5 L9,1" fill="none" stroke="#a2a2a2" stroke-width="1"/></svg>
<svg style="left:152px;top:207.4px" width="14" height="14" viewBox="0 0 14 14"><path d="M12.2,7.2 V10.4 a2.2,2.2 0 0 1 -2.2,2.2 H3.6 a2.2,2.2 0 0 1 -2.2,-2.2 V4 a2.2,2.2 0 0 1 2.2,-2.2 H6.8" fill="none" stroke="#6f6f6f" stroke-width="1.15"/><path d="M7,7.2 L12,2.2" stroke="#6f6f6f" stroke-width="1.15"/></svg>
<div style="left:179px;top:205.5px;width:16.8px;height:16.5px;background:#2b2b2b;"></div>
<div class="box" style="left:200px;top:202px;width:116.5px;height:24.5px"></div>
<svg style="left:204.0px;top:211.15px" width="10" height="6.5" viewBox="0 0 10 6.5"><path d="M1,1 L5.0,5.5 L9,1" fill="none" stroke="#a2a2a2" stroke-width="1"/></svg>
<svg style="left:320.5px;top:207.4px" width="14" height="14" viewBox="0 0 14 14"><path d="M12.2,7.2 V10.4 a2.2,2.2 0 0 1 -2.2,2.2 H3.6 a2.2,2.2 0 0 1 -2.2,-2.2 V4 a2.2,2.2 0 0 1 2.2,-2.2 H6.8" fill="none" stroke="#6f6f6f" stroke-width="1.15"/><path d="M7,7.2 L12,2.2" stroke="#6f6f6f" stroke-width="1.15"/></svg>
<div style="left:10px;top:234px;width:16.8px;height:16.5px;background:#e5401c;"></div>
<div class="box" style="left:31.5px;top:230.5px;width:116.0px;height:24.0px"></div>
<svg style="left:35.5px;top:239.05px" width="10" height="6.5" viewBox="0 0 10 6.5"><path d="M1,1 L5.0,5.5 L9,1" fill="none" stroke="#a2a2a2" stroke-width="1"/></svg>
<svg style="left:152px;top:235.3px" width="14" height="14" viewBox="0 0 14 14"><path d="M12.2,7.2 V10.4 a2.2,2.2 0 0 1 -2.2,2.2 H3.6 a2.2,2.2 0 0 1 -2.2,-2.2 V4 a2.2,2.2 0 0 1 2.2,-2.2 H6.8" fill="none" stroke="#6f6f6f" stroke-width="1.15"/><path d="M7,7.2 L12,2.2" stroke="#6f6f6f" stroke-width="1.15"/></svg>
<div style="left:3px;top:271px;width:338px;height:23.2px;background:#f3f3f3;"></div>
<svg style="left:12px;top:276px" width="15" height="14" viewBox="0 0 15 14"><g fill="none" stroke-width="1" stroke-linejoin="round"><path d="M3.4,1.2 H13.4 L11.2,4.6 H1.2 Z" stroke="#666"/><path d="M13.6,5.4 L11.2,8.8 H1.2 L2.6,6.6" stroke="#2fb35c"/><path d="M13.6,9.4 L11.2,12.8 H1.2 L2.6,10.6" stroke="#2fb35c"/></g></svg>
<div style="left:88.5px;top:275px;width:83.2px;height:15.6px;background:#dedede;border-radius:8px"></div>
<div style="left:88.5px;top:275px;width:42px;height:15.6px;background:#00ae42;border-radius:8px"></div>
<div style="left:272.5px;top:276.3px;width:22.2px;height:12.6px;background:#a8a8a8;border-radius:7px"></div>
<div style="left:273.5px;top:277.2px;width:10.8px;height:10.8px;border-radius:6px;background:#fff"></div>
<svg style="left:304px;top:275px" width="16" height="15" viewBox="0 0 16 15"><g fill="none" stroke="#444" stroke-width="1.1"><rect x="1" y="1" width="13.6" height="12.6" rx="1.4"/><path d="M3.2,4.4 H4.6 M6.2,4.4 H12.4 M3.2,7.3 H4.6 M6.2,7.3 H12.4 M3.2,10.2 H4.6 M6.2,10.2 H12.4"/></g></svg>
<svg style="left:322px;top:276px" width="13" height="13" viewBox="0 0 13 13"><g fill="none" stroke="#6fce9a" stroke-width="0.9"><circle cx="2.8" cy="2.8" r="1.6"/><circle cx="2.8" cy="9.8" r="1.6"/><circle cx="9.6" cy="2.6" r="1.4"/><path d="M4,4 L10.6,10.8 M4,8.6 L8.4,4.2"/></g></svg>
<div class="box" style="left:10.5px;top:305.5px;width:266.0px;height:19.30000000000001px"></div>
<svg style="left:14.5px;top:311.95px" width="10" height="6.5" viewBox="0 0 10 6.5"><path d="M1,1 L5.0,5.5 L9,1" fill="none" stroke="#a2a2a2" stroke-width="1"/></svg>
<svg style="left:284px;top:308.2px" width="13" height="13" viewBox="0 0 13 13"><path d="M4.6,11 A4.6,4.6 0 1 1 10.9,7.4" fill="none" stroke="#e8714f" stroke-width="1.1"/><path d="M8.9,6.6 L10.9,8.6 L12.4,6.2 Z" fill="#e8714f" stroke="#e8714f" stroke-width="0.6"/></svg>
<svg style="left:303px;top:308.8px" width="12" height="12" viewBox="0 0 12 12"><path d="M1,1.6 a0.6,0.6 0 0 1 .6,-.6 H8 L10.8,3.6 V10.4 a.6,.6 0 0 1 -.6,.6 H1.6 a.6,.6 0 0 1 -.6,-.6 Z" fill="none" stroke="#555" stroke-width="1"/><rect x="3" y="1.4" width="4.2" height="2.6" fill="#555"/><rect x="2.8" y="7.2" width="6" height="2.4" fill="#555"/></svg>
<svg style="left:321px;top:308.3px" width="15" height="14" viewBox="0 0 15 14"><circle cx="5.6" cy="5.4" r="4.2" fill="none" stroke="#444" stroke-width="1.1"/><path d="M8.6,8.6 L13.4,12.8" stroke="#444" stroke-width="1.2"/></svg>
<div style="left:3px;top:357px;width:338px;height:1px;background:#dcdcdc;"></div>
<div style="left:12px;top:355px;width:46px;height:2px;background:#00ae42;"></div>
<div style="left:100px;top:373px;width:236px;height:1px;background:#ececec;"></div>
<svg style="left:7px;top:367px" width="15" height="13" viewBox="0 0 15 13"><path d="M1.2,3 a2,2 0 0 1 2,-2 H11 a2,2 0 0 1 2,2 V11.4 H1.2 Z" fill="none" stroke="#444" stroke-width="1"/><path d="M1.2,4.6 H13 M1.2,6.9 H13 M1.2,9.2 H13" stroke="#444" stroke-width="1.3"/></svg>
<div class="box" style="left:200px;top:388.5px;width:96px;height:19.0px"></div>
<div class="box" style="left:200px;top:412px;width:96px;height:19.5px"></div>
<div style="left:60px;top:447px;width:276px;height:1px;background:#ececec;"></div>
<svg style="left:7.5px;top:441.5px" width="13" height="13" viewBox="0 0 13 13"><rect x="0.6" y="0.6" width="11.6" height="11.6" fill="#ececec" stroke="#555" stroke-width="1"/><path d="M3,9.6 L4,6.4 L6.6,5 L9.6,3" fill="none" stroke="#777" stroke-width="0.9" stroke-dasharray="1.4 0.8"/></svg>
<div class="box" style="left:200px;top:463px;width:96px;height:19.5px"></div>
<svg style="left:204.5px;top:469.75px" width="10" height="6.5" viewBox="0 0 10 6.5"><path d="M1,1 L5.0,5.5 L9,1" fill="none" stroke="#a2a2a2" stroke-width="1"/></svg>
<div style="left:86px;top:498px;width:250px;height:1px;background:#ececec;"></div>
<svg style="left:6.5px;top:491.5px" width="17" height="15" viewBox="0 0 17 15"><g fill="none" stroke="#444" stroke-width="1"><circle cx="6.2" cy="5.8" r="4.2" stroke-dasharray="2.2 1.1"/><circle cx="6.2" cy="5.8" r="1.5"/><circle cx="11.4" cy="10" r="3.4" fill="#fff"/><circle cx="11.4" cy="10" r="1.1"/></g></svg>
<div class="box" style="left:200px;top:520.5px;width:96px;height:19.299999999999955px"></div>
<svg style="left:204.5px;top:527.05px" width="10" height="6.5" viewBox="0 0 10 6.5"><path d="M1,1 L5.0,5.5 L9,1" fill="none" stroke="#a2a2a2" stroke-width="1"/></svg>
<div style="left:200.5px;top:554px;width:13.6px;height:13.6px;border:1px solid #b5b5b5;border-radius:2px;background:#fff"></div><div style="left:341px;top:60px;width:656px;height:38.3px;background:#fff;"></div><svg style="left:341px;top:60px" width="656" height="37" viewBox="341 60 656 37" fill="none" stroke-width="1.1" stroke-linejoin="round"><g stroke="#2e2e2e"><path d="M345.8,74.2 H362.5 V90.2 H345.8 Z M345.8,74.2 L353.6,66.3 H369.6 L362.5,74.2 M369.6,66.3 V78"/><circle cx="369.8" cy="84.2" r="5.7" fill="#fff"/><path d="M366.4,84.2 H373.2 M369.8,80.8 V87.6"/></g><g stroke="#2e2e2e"><path d="M381.40,66.9 V90 M386.02,66.9 V90 M390.64,66.9 V90 M395.26,66.9 V90 M399.88,66.9 V90 M404.50,66.9 V90 M381.4,66.90 H404.5 M381.4,71.52 H404.5 M381.4,76.14 H404.5 M381.4,80.76 H404.5 M381.4,85.38 H404.5 M381.4,90.00 H404.5 "/><circle cx="402.4" cy="86.6" r="5.7" fill="#fff"/><path d="M399,86.6 H405.8 M402.4,83.2 V90"/></g><g stroke="#2e2e2e"><path d="M430,67.4 L443.6,71.2 L439.8,84.8 L426.2,81 Z"/><path d="M424.6,78.2 L419,83.8 M417.2,85.6 L418.2,80.6 L422.2,84.6 Z"/><rect x="419.4" y="89.9" width="24.2" height="1.7" rx="0.85"/></g><text x="416.2" y="74.6" font-family="'Liberation Sans',sans-serif" font-size="4.3" font-weight="bold" fill="#2e2e2e" stroke="none" textLength="10" lengthAdjust="spacingAndGlyphs">AUTO</text><g stroke="#2e2e2e"><rect x="451.8" y="66.8" width="25.5" height="25" rx="0.8" stroke-width="1.3"/><rect x="454.8" y="69.8" width="19.8" height="6"/><rect x="454.8" y="78.4" width="6" height="10.8"/><rect x="463.2" y="78.8" width="11.4" height="3.8"/><rect x="463.2" y="85.2" width="11.4" height="4"/></g><g stroke="#c6c6c6"><path d="M498.70,88.5 H493.20 V66.3 H506.70 L511.20,71"/><path d="M498.70,71.2 H512.20 L516.70,75.8 V93 H498.70 Z" fill="#fff"/></g><rect x="504.6" y="77" width="6.4" height="10.6" rx="3.2" stroke="#c6c6c6"/><g stroke="#c6c6c6"><path d="M534.00,88.5 H528.50 V66.3 H542.00 L546.50,71"/><path d="M534.00,71.2 H547.50 L552.00,75.8 V93 H534.00 Z" fill="#fff"/></g><path d="M539.6,88.2 V77.2 H543.2 a3,3 0 0 1 0,6 H539.6" stroke="#c6c6c6"/><g stroke="#c6c6c6"><path d="M564.6,70.2 H586.8"/><rect x="564.6" y="72.2" width="22.2" height="2.8" rx="0.8"/><rect x="564.6" y="76.9" width="22.2" height="2.8" rx="0.8"/><rect x="564.6" y="81.8" width="22.2" height="3" rx="0.8"/><rect x="564.6" y="86.8" width="22.2" height="3.6" rx="0.8"/></g><path d="M604.5,68 V91.6" stroke="#e2e2e2" stroke-width="1"/><g stroke="#c6c6c6"><path d="M630.20,79.60 L625.20,83.80 L625.20,81.40 L621.60,81.40 L621.60,77.80 L625.20,77.80 L625.20,75.40 Z M603.80,79.60 L608.80,75.40 L608.80,77.80 L612.40,77.80 L612.40,81.40 L608.80,81.40 L608.80,83.80 Z M617.00,92.80 L612.80,87.80 L615.20,87.80 L615.20,84.20 L618.80,84.20 L618.80,87.80 L621.20,87.80 Z M617.00,66.40 L621.20,71.40 L618.80,71.40 L618.80,75.00 L615.20,75.00 L615.20,71.40 L612.80,71.40 Z"/><rect x="615.6" y="78.2" width="2.8" height="2.8"/></g><g stroke="#c6c6c6"><path d="M652.5,73.6 L662.2,83.3 L652.5,93 L642.8,83.3 Z"/><path d="M641,83 A10.2,10.2 0 0 1 659.6,71.6"/><path d="M658.4,75.6 L665.4,76.4 L663,69.2 Z"/></g><g stroke="#c6c6c6"><rect x="675.2" y="78.2" width="14" height="13.6"/><path d="M675.2,76 V66.9 H700.4 V91.8 H691.4" stroke-dasharray="2 1.6"/><path d="M690.4,76.4 L696,70.8 M692.6,69.6 H697.2 V74.2"/></g><g stroke="#c6c6c6"><path d="M723,67.4 L737.2,71.2 L733.4,84.8 L719.2,81 Z"/><path d="M717.8,78.2 L712.8,83.6 M711,85.6 L712,80.4 L716.2,84.4 Z"/><rect x="712.6" y="89.9" width="24.2" height="1.7" rx="0.85"/></g><g stroke="#c6c6c6"><rect x="747.4" y="66.9" width="23.2" height="10.4"/><rect x="747.4" y="81.2" width="23.2" height="10.6"/><path d="M747.4,79.2 H770.6" stroke-dasharray="1.2 1.2"/></g><g stroke="#c6c6c6"><rect x="790" y="73.6" width="9.7" height="11.9" fill="#e4e4e4" stroke="none"/><rect x="781" y="73.6" width="18.7" height="18.6"/><rect x="790" y="66.9" width="18.3" height="18.6"/></g><g stroke="#c6c6c6"><rect x="819.2" y="77.4" width="9" height="14.4" fill="#dcdcdc" stroke="none"/><path d="M818.6,66.9 H841.8 V91.8 H832.8 V77.3 H818.6 Z"/><path d="M819.2,77.4 V91.8 H828.2"/></g><g stroke="#c6c6c6"><path d="M853.8,75 H871 V91.8 H853.8 Z M853.8,75 L862,66.9 H878.4 L871,75 M878.4,66.9 V84 L871,91.8"/><path d="M859.4,76.4 L860.6,80.6 L859.6,84 L861.8,87.4 L861,91" stroke-width="0.8"/></g><g stroke="#c6c6c6"><path d="M889.8,66.9 H908.4 V71.3 H901.7 V91.5 H896.5 V71.3 H889.8 Z"/></g><text x="903.4" y="91.7" font-family="'Liberation Sans',sans-serif" font-size="14" fill="#fff" stroke="#c6c6c6" stroke-width="0.9">a</text><g stroke="#c6c6c6"><path d="M935.4,67.6 L947,79.2 L934.6,91.6 L923.6,80.2 Z"/><path d="M925.8,78.6 H946.4"/><path d="M926.6,67 L935,75.2" stroke-width="1.8"/><path d="M947.4,82.6 C949.4,85.8 951.4,87.6 951.4,89.6 A4,3.6 0 0 1 943.4,89.6 C943.4,87.6 945.4,85.8 947.4,82.6 Z" fill="#fff"/></g><path d="M966,67 V92" stroke="#b9b9b9" stroke-width="1.5"/><g stroke="#2e2e2e" stroke-width="1.2"><path d="M995,72.4 H982.4 V92.6 H998"/><path d="M982.4,82.6 H985.4 C985,84.6 988.6,84.6 988.4,82.6 H992.2"/><path d="M992.4,72.4 C992.6,74 994.2,73.4 993.8,75.4 C990.6,75.2 990.4,78.6 992.4,78.8 C993.2,80.4 992,81.4 992.4,82.6 C992.2,84.6 993.4,85.6 993,86.6 C994.6,87 994.4,89.2 992.6,89 V92.6"/><path d="M993.4,72.4 C994,70.6 995.4,71 995.6,68.6 C996.4,67.2 997,67 998,66.4"/></g></svg><div style="left:3px;top:4px;width:994px;height:28px;background:#262e30;"></div>
<div style="left:3px;top:4px;width:994px;height:1.5px;background:#151a1c;"></div>
<svg style="left:13px;top:11px" width="16" height="14" viewBox="0 0 16 14"><path d="M1,1.8 H15 M1,7 H15 M1,12.2 H15" stroke="#fff" stroke-width="1.5" stroke-linecap="round"/></svg>
<svg style="left:65.75px;top:15.2px" width="10.5" height="6.2" viewBox="0 0 10.5 6.2"><path d="M1,1 L5.25,5.2 L9.5,1" fill="none" stroke="#fff" stroke-width="1.3"/></svg>
<div style="left:92px;top:8px;width:1px;height:21px;background:#3c4447;"></div>
<svg style="left:112px;top:10px" width="16" height="16" viewBox="0 0 16 16"><path d="M2,2.2 a1,1 0 0 1 1,-1 H10.5 L14.2,4.8 V13.8 a1,1 0 0 1 -1,1 H3 a1,1 0 0 1 -1,-1 Z" fill="none" stroke="#fff" stroke-width="1.3" stroke-linejoin="round"/><rect x="4.2" y="1.6" width="5.6" height="3.6" fill="#fff"/><rect x="4" y="9.6" width="8.2" height="3.4" fill="#fff"/></svg>
<svg style="left:146.5px;top:11.5px" width="15" height="12" viewBox="0 0 15 12"><path d="M0.5,5.8 L6.3,0.8 V3.6 C10.8,3.6 13.2,6.4 13.6,10.6 C11.8,8.2 9.8,7.6 6.3,7.7 V10.6 Z" fill="#fff"/></svg>
<svg style="left:181px;top:11.5px" width="15" height="12" viewBox="0 0 15 12"><g transform="translate(14.2,0) scale(-1,1)"><path d="M0.5,5.8 L6.3,0.8 V3.6 C10.8,3.6 13.2,6.4 13.6,10.6 C11.8,8.2 9.8,7.6 6.3,7.7 V10.6 Z" fill="#fff"/></g></svg>
<div style="left:919.5px;top:17.3px;width:8.5px;height:1px;background:#e8e8e8;"></div>
<svg style="left:945px;top:12.5px" width="14" height="11.5" viewBox="0 0 14 11.5"><rect x="0.8" y="0.8" width="12.2" height="9.6" rx="1" fill="none" stroke="#f0f0f0" stroke-width="1"/><path d="M0.8,2.8 H13" stroke="#f0f0f0" stroke-width="1.2"/></svg>
<svg style="left:976px;top:13.5px" width="10" height="10" viewBox="0 0 10 10"><path d="M1,1 L9,9 M9,1 L1,9" stroke="#f0f0f0" stroke-width="1.05"/></svg><div style="left:3px;top:31px;width:994px;height:29px;background:#3b4346;"></div>
<div style="left:3px;top:31px;width:994px;height:1px;background:#1b2022;"></div>
<div style="left:35.5px;top:31.5px;width:109px;height:28.5px;background:#00ae42;"></div>
<svg style="left:9px;top:36px" width="20" height="20" viewBox="0 0 20 20"><path d="M10,1.2 L0.8,9.6 H3.4 V18.2 H8 V12.4 H12 V18.2 H16.6 V9.6 H19.2 Z" fill="#fff"/></svg>
<svg style="left:57px;top:39px" width="16" height="14" viewBox="0 0 16 14"><path d="M8,0.8 L14.4,4.2 V10.2 L8,13.6 L1.6,10.2 V4.2 Z M1.6,4.2 L8,7.8 L14.4,4.2" fill="none" stroke="#fff" stroke-width="1.1" stroke-linejoin="round"/></svg>
<svg style="left:166.5px;top:38.5px" width="16" height="16" viewBox="0 0 16 16"><path d="M8,1 L14.5,4.2 L8,7.4 L1.5,4.2 Z M1.5,7.6 L8,10.8 L14.5,7.6 M1.5,11 L8,14.2 L14.5,11" fill="none" stroke="#fff" stroke-width="1.1" stroke-linejoin="round"/></svg>
<svg style="left:279px;top:38.5px" width="16" height="15" viewBox="0 0 16 15"><g fill="none" stroke="#fff" stroke-width="1.1"><rect x="1" y="1" width="6.4" height="4.2" rx="0.6"/><path d="M4.2,5.2 V7.6 M2.6,7.6 H5.8"/><path d="M10.5,1 H13.4 a1,1 0 0 1 1,1 V4.4"/><path d="M1,9.6 V12.6 a1,1 0 0 0 1,1 H4.4"/><rect x="9" y="8.2" width="5.4" height="5.4" rx="0.6"/><path d="M10.6,10.2 V11.8 H12.8 V10.2" stroke-width="0.9"/></g></svg>
<svg style="left:486px;top:38.5px" width="16" height="15" viewBox="0 0 16 15"><g fill="none" stroke="#fff" stroke-width="1.1"><rect x="1" y="1" width="6.4" height="4.2" rx="0.6"/><path d="M4.2,5.2 V7.6 M2.6,7.6 H5.8"/><path d="M10.5,1 H13.4 a1,1 0 0 1 1,1 V4.4"/><path d="M1,9.6 V12.6 a1,1 0 0 0 1,1 H4.4"/><rect x="9" y="8.2" width="5.4" height="5.4" rx="0.6"/><path d="M10.6,10.2 V11.8 H12.8 V10.2" stroke-width="0.9"/></g></svg>
<svg style="left:387px;top:38.5px" width="16" height="15" viewBox="0 0 16 15"><g fill="none" stroke="#fff" stroke-width="1.1"><rect x="1" y="1" width="13.6" height="12.6" rx="1.2"/><path d="M3.4,4.4 H4.8 M6.4,4.4 H12.2 M3.4,7.3 H4.8 M6.4,7.3 H12.2 M3.4,10.2 H4.8 M6.4,10.2 H12.2"/></g></svg>
<div style="left:615px;top:36px;width:104px;height:19.5px;background:#00ae42;border-radius:10px"></div>
<svg style="left:637px;top:38px" width="16" height="15" viewBox="0 0 16 15"><g fill="none" stroke="#fff" stroke-width="1.4" stroke-linecap="round" stroke-linejoin="round"><path d="M8,9.6 V1.6 M4.8,4.6 L8,1.4 L11.2,4.6"/><path d="M1.8,7.6 V9.4 a3.4,3.4 0 0 0 3.4,3.4 H10.8 a3.4,3.4 0 0 0 3.4,-3.4 V7.6"/></g></svg>
<div style="left:732.5px;top:36px;width:109.5px;height:19.5px;background:#00ae42;border-radius:10px"></div>
<div style="left:752.2px;top:36px;width:1.2px;height:19.5px;background:#3b4346;"></div>
<svg style="left:738.25px;top:43.2px" width="9.5" height="5.6" viewBox="0 0 9.5 5.6"><path d="M1,1 L4.75,4.6 L8.5,1" fill="none" stroke="#fff" stroke-width="1.4"/></svg>
<div style="left:854.5px;top:36px;width:111px;height:19.5px;background:#6d6f6f;border-radius:10px;overflow:hidden"></div>
<div style="left:854.5px;top:36px;width:21px;height:19.5px;background:#00ae42;border-radius:10px 0 0 10px"></div>
<svg style="left:860.75px;top:43.2px" width="9.5" height="5.6" viewBox="0 0 9.5 5.6"><path d="M1,1 L4.75,4.6 L8.5,1" fill="none" stroke="#fff" stroke-width="1.4"/></svg><div class="t" id="t_file" style="left:32px;top:18px;font-size:10.23px;color:#ffffff;letter-spacing:-0.367px;">File</div>
<div class="t" id="t_title" style="left:516.25px;top:18px;font-size:10.23px;color:#ffffff;letter-spacing:-0.089px;">My Sign Draft</div>
<div class="t" id="t_prepare" style="left:80.4px;top:46px;font-size:12.25px;color:#ffffff;letter-spacing:0.001px;">Prepare</div>
<div class="t" id="t_preview" style="left:189.25px;top:46px;font-size:12.16px;color:#ffffff;letter-spacing:0.0px;">Preview</div>
<div class="t" id="t_device" style="left:302px;top:46px;font-size:11.77px;color:#ffffff;letter-spacing:0.005px;">Device</div>
<div class="t" id="t_project" style="left:409.5px;top:46px;font-size:12.45px;color:#ffffff;letter-spacing:0.004px;">Project</div>
<div class="t" id="t_calib" style="left:508.75px;top:46px;font-size:12.5px;color:#ffffff;letter-spacing:0.067px;">Calibration</div>
<div class="t" id="t_upload" style="left:657px;top:45.5px;font-size:12.38px;color:#ffffff;letter-spacing:0.005px;">Upload</div>
<div class="t" id="t_slice" style="left:766.25px;top:45.5px;font-size:12.19px;color:#ffffff;letter-spacing:0.001px;">Slice plate</div>
<div class="t" id="t_print" style="left:888.75px;top:45.5px;font-size:12.5px;color:#a9a9a9;letter-spacing:0.111px;">Print plate</div>
<div class="t" id="t_printer" style="left:33.25px;top:72.5px;font-size:12.47px;color:#2c2c2c;letter-spacing:0.002px;">Printer</div>
<div class="t" id="t_printername" style="left:23px;top:108px;font-size:12.22px;color:#2c2c2c;letter-spacing:0.003px;">Bambu Lab X1 Carbon 0.4 nozzle</div>
<div class="t" id="t_platetype" style="left:12.5px;top:134px;font-size:12.48px;color:#1e1e1e;letter-spacing:0.005px;">Plate type</div>
<div class="t" id="t_textured" style="left:103px;top:134px;font-size:12.32px;color:#2c2c2c;letter-spacing:0.001px;">Textured PEI Plate</div>
<div class="t" id="t_filament" style="left:34.5px;top:173.3px;font-size:12.09px;color:#2c2c2c;letter-spacing:-0.041px;">Filament</div>
<div class="t" id="t_flushing" style="left:136.5px;top:173.3px;font-size:9.06px;color:#7a7a7a;letter-spacing:0.006px;">Flushing volumes</div>
<div class="t" id="t_f1" style="left:48.5px;top:214.4px;font-size:11.62px;color:#2c2c2c;letter-spacing:-0.123px;">Bambu PLA Basic</div>
<div class="t" id="t_f2" style="left:217.6px;top:214.4px;font-size:11.62px;color:#2c2c2c;letter-spacing:-0.123px;">Bambu PLA Basic</div>
<div class="t" id="t_f3" style="left:48.5px;top:242.3px;font-size:11.62px;color:#2c2c2c;letter-spacing:-0.123px;">Bambu PLA Basic</div>
<div class="t" id="t_process" style="left:36px;top:282.8px;font-size:12.09px;color:#2c2c2c;letter-spacing:-0.292px;">Process</div>
<div class="t" id="t_global" style="left:95.4px;top:282.8px;font-size:10.23px;color:#ffffff;letter-spacing:-0.108px;">Global</div>
<div class="t" id="t_objects" style="left:132.6px;top:282.8px;font-size:10.23px;color:#7d7d7d;letter-spacing:0.006px;">Objects</div>
<div class="t" id="t_advancedt" style="left:215.2px;top:282.8px;font-size:12.16px;color:#2c2c2c;letter-spacing:0.003px;">Advanced</div>
<div class="t" id="t_preset" style="left:26.6px;top:315.7px;font-size:12.16px;color:#2c2c2c;letter-spacing:-0.001px;">* 0.20mm Standard @BBL X1C</div>
<div class="t" id="t_quality" style="left:14.4px;top:347px;font-size:12.18px;color:#e8623e;letter-spacing:0.005px;font-weight:bold;">Quality</div>
<div class="t" id="t_strength" style="left:77px;top:347px;font-size:12.75px;color:#6e6e6e;letter-spacing:-0.0px;">Strength</div>
<div class="t" id="t_support" style="left:146.2px;top:347px;font-size:12.64px;color:#6e6e6e;letter-spacing:0.012px;">Support</div>
<div class="t" id="t_others" style="left:212.9px;top:347px;font-size:12.36px;color:#6e6e6e;letter-spacing:0.001px;">Others</div>
<div class="t" id="t_lh_b" style="left:24.5px;top:373.9px;font-size:12.14px;color:#1c1c1c;letter-spacing:0.009px;font-weight:bold;">Layer height</div>
<div class="t" id="t_lh" style="left:23.3px;top:398.4px;font-size:12.3px;color:#2c2c2c;letter-spacing:0.001px;">Layer height</div>
<div class="t" id="t_flh" style="left:23.3px;top:421.5px;font-size:12.37px;color:#2c2c2c;letter-spacing:0.002px;">First layer height</div>
<div class="t" id="t_seam_b" style="left:24.2px;top:447.8px;font-size:12.09px;color:#1c1c1c;letter-spacing:-0.309px;font-weight:bold;">Seam</div>
<div class="t" id="t_v1" style="left:205.4px;top:398.4px;font-size:11.62px;color:#2c2c2c;letter-spacing:-0.147px;">0.2</div>
<div class="t" id="t_v2" style="left:205.4px;top:421.5px;font-size:11.62px;color:#2c2c2c;letter-spacing:-0.147px;">0.2</div>
<div class="t" id="t_mm1" style="left:272.5px;top:399.5px;font-size:10.14px;color:#6e6e6e;letter-spacing:0.012px;">mm</div>
<div class="t" id="t_mm2" style="left:272.5px;top:422.5px;font-size:10.14px;color:#6e6e6e;letter-spacing:0.012px;">mm</div>
<div class="t" id="t_seampos" style="left:22.8px;top:473.1px;font-size:12.21px;color:#2c2c2c;letter-spacing:0.004px;">Seam position</div>
<div class="t" id="t_adv_b" style="left:26.3px;top:498.9px;font-size:12.09px;color:#1c1c1c;letter-spacing:-0.254px;font-weight:bold;">Advanced</div>
<div class="t" id="t_oow1" style="left:23.1px;top:523.9px;font-size:12.43px;color:#2c2c2c;letter-spacing:0.002px;">Only one wall on top</div>
<div class="t" id="t_oow2" style="left:23.1px;top:537.6px;font-size:12.09px;color:#2c2c2c;letter-spacing:-0.057px;">surfaces</div>
<div class="t" id="t_oowf" style="left:23.1px;top:561.2px;font-size:12.36px;color:#2c2c2c;letter-spacing:0.002px;">Only one wall on first layer</div>
<div class="t" id="t_aligned" style="left:216.9px;top:473.1px;font-size:12.09px;color:#2c2c2c;letter-spacing:0.0px;">Aligned</div>
<div class="t" id="t_alltop" style="left:216.9px;top:530.4px;font-size:12.15px;color:#2c2c2c;letter-spacing:0.004px;">All top surfa...</div>
<div class="t" id="t_n1" style="left:15.5px;top:213.6px;font-size:9.35px;color:#333;letter-spacing:-0.203px;font-weight:bold;">1</div>
<div class="t" id="t_n2" style="left:184.5px;top:213.6px;font-size:10.5px;color:#ffffff;letter-spacing:0.156px;font-weight:bold;">2</div>
<div class="t" id="t_n3" style="left:15.3px;top:242px;font-size:10.24px;color:#ffffff;letter-spacing:-0.003px;font-weight:bold;">3</div></div></div></body></html>
